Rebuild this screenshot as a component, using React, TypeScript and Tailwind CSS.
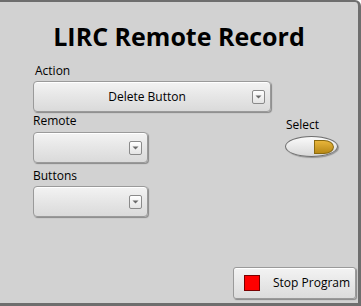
import React from 'react';

const Arrow: React.FC = () => (
  <div className="flex h-[14px] w-[13px] items-center justify-center rounded-[2px] border border-[#8a8a8a] bg-gradient-to-b from-[#ffffff] to-[#e4e4e4]">
    <svg width="7" height="4" viewBox="0 0 7 4">
      <path d="M0.5 0.5 L6.5 0.5 L3.5 3.5 Z" fill="#6a6a6a" />
    </svg>
  </div>
);

const Ring: React.FC<{ width: string; label?: string }> = ({ width, label }) => (
  <div
    className={`${width} flex h-[31px] items-center rounded-[4px] border border-[#9a9a9a] bg-gradient-to-b from-[#f3f3f3] via-[#e6e6e6] to-[#dadada] pl-2 pr-[5px] shadow-[1px_1px_1px_rgba(0,0,0,0.35),inset_0_1px_0_#ffffff]`}
  >
    <div className="flex-1 text-center text-[12px] text-black">{label}</div>
    <Arrow />
  </div>
);

export default function App() {
  return (
    <div
      className="flex h-[306px] w-[361px] flex-col rounded-tr-[6px] border-b-[3px] border-r-[3px] border-t-[2px] border-[#6e6e6e] bg-[#d2d2d2]"
      style={{ fontFamily: '"Open Sans", "Noto Sans", sans-serif' }}
    >
      <div className="mt-[17px] text-center text-[25px] font-bold leading-[34px] text-black">
        LIRC Remote Record
      </div>

      <div className="flex">
        <div className="ml-[33px] mt-[10px] flex flex-col">
          <div className="ml-[2px] text-[12px] leading-[16px] text-black">Action</div>
          <div className="mt-[2px]">
            <Ring width="w-[238px]" label="Delete Button" />
          </div>
          <div className="mt-[1px] text-[12px] leading-[16px] text-black">Remote</div>
          <div className="mt-[3px]">
            <Ring width="w-[115px]" />
          </div>
          <div className="mt-[5px] text-[12px] leading-[16px] text-black">Buttons</div>
          <div className="mt-[2px]">
            <Ring width="w-[115px]" />
          </div>
        </div>

        <div className="ml-[14px] mt-[64px] flex flex-col items-start">
          <div className="ml-[1px] text-[12px] leading-[16px] text-black">Select</div>
          <div className="mt-[3px] flex h-[21px] w-[53px] items-center justify-end rounded-[50%] border border-[#6e6e6e] bg-gradient-to-b from-[#fafafa] to-[#d8d8d8] pr-[3px] shadow-[1px_1px_1px_rgba(0,0,0,0.3)]">
            <div className="h-[14px] w-[20px] rounded-r-[50%] border border-[#8a6a10] bg-gradient-to-b from-[#e8b53a] to-[#b98a15]" />
          </div>
        </div>
      </div>

      <div className="mt-auto mb-[4px] mr-[2px] flex justify-end">
        <div className="flex h-[32px] w-[123px] items-center rounded-[3px] border border-[#9a9a9a] bg-gradient-to-b from-[#f3f3f3] to-[#dcdcdc] pl-[10px] shadow-[1px_1px_1px_rgba(0,0,0,0.35),inset_0_1px_0_#ffffff]">
          <div className="h-[16px] w-[16px] border border-[#7a0000] bg-[#ff0000]" />
          <div className="ml-[13px] text-[12px] text-black">Stop Program</div>
        </div>
      </div>
    </div>
  );
}
